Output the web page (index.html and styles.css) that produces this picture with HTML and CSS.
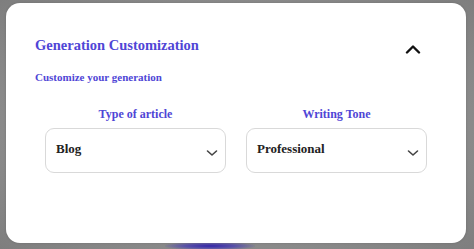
FILE: index.html
```html
<!DOCTYPE html>
<html lang="en">
<head>
    <meta charset="UTF-8">
    <meta name="viewport" content="width=device-width, initial-scale=1.0">
    <title>Generation Customization</title>
    <link rel="stylesheet" href="styles.css">
</head>
<body>
    <div class="glow"></div>
    <section class="panel">
        <header class="panel-head">
            <h2>Generation Customization</h2>
            <button class="toggle" aria-label="Collapse">
                <svg width="16" height="10" viewBox="0 0 16 10">
                    <path d="M2 8.5 L8 2.5 L14 8.5" fill="none" stroke="#111" stroke-width="2.4" stroke-linecap="round" stroke-linejoin="round"/>
                </svg>
            </button>
        </header>
        <p class="subtitle">Customize your generation</p>

        <div class="options">
            <div class="field">
                <label for="articleType">Type of article</label>
                <div class="select">
                    <span id="articleType">Blog</span>
                    <svg width="12" height="8" viewBox="0 0 12 8">
                        <path d="M1.5 2 L6 6 L10.5 2" fill="none" stroke="#444" stroke-width="1.6" stroke-linecap="round" stroke-linejoin="round"/>
                    </svg>
                </div>
            </div>
            <div class="field">
                <label for="writingTone">Writing Tone</label>
                <div class="select">
                    <span id="writingTone">Professional</span>
                    <svg width="12" height="8" viewBox="0 0 12 8">
                        <path d="M1.5 2 L6 6 L10.5 2" fill="none" stroke="#444" stroke-width="1.6" stroke-linecap="round" stroke-linejoin="round"/>
                    </svg>
                </div>
            </div>
        </div>
    </section>
</body>
</html>
```

FILE: styles.css
```css
/* General Styles */
body {
    margin: 0;
    padding: 3px 8px 6px 6px;
    height: 249px;
    box-sizing: border-box;
    background: radial-gradient(ellipse at center, #9a9a9a 0%, #8a8a8a 70%, #7e7e7e 100%);
    font-family: 'Liberation Serif', 'Times New Roman', serif;
    position: relative;
    overflow: hidden;
}

/* Blurred button peeking under the panel */
.glow {
    position: absolute;
    left: 165px;
    bottom: -1px;
    width: 90px;
    height: 8px;
    background: radial-gradient(ellipse at center, #3425a8 0%, #5a52a8 40%, rgba(139, 139, 139, 0) 75%);
}

/* Panel */
.panel {
    position: relative;
    background: #ffffff;
    border-radius: 14px;
    height: 240px;
    box-sizing: border-box;
    padding: 34px 29px 0 29px;
    box-shadow: 0 0 3px rgba(0, 0, 0, 0.15);
}

.panel-head {
    display: flex;
    justify-content: space-between;
    align-items: center;
}

.panel-head h2 {
    margin: 0;
    font-size: 14.5px;
    font-weight: bold;
    color: #4f46d6;
}

.toggle {
    border: none;
    background: none;
    padding: 0;
    margin-right: 16px;
    margin-top: 6px;
    display: flex;
}

.subtitle {
    margin: 17px 0 0 0;
    font-size: 11px;
    font-weight: bold;
    color: #4f46d6;
}

/* Dropdowns */
.options {
    display: grid;
    grid-template-columns: 181px 181px;
    gap: 20px;
    justify-content: center;
    margin-top: 24px;
}

.field {
    display: flex;
    flex-direction: column;
    align-items: stretch;
}

.field label {
    text-align: center;
    font-size: 12px;
    font-weight: bold;
    color: #4f46d6;
    margin-bottom: 6px;
}

.select {
    height: 45px;
    box-sizing: border-box;
    border: 1px solid #d9d9d9;
    border-radius: 9px;
    display: flex;
    justify-content: space-between;
    align-items: center;
    padding: 0 7px 0 10px;
}

.select span {
    font-size: 13px;
    font-weight: bold;
    color: #222;
    margin-top: -3px;
}

.select svg {
    margin-top: 5px;
}
```
